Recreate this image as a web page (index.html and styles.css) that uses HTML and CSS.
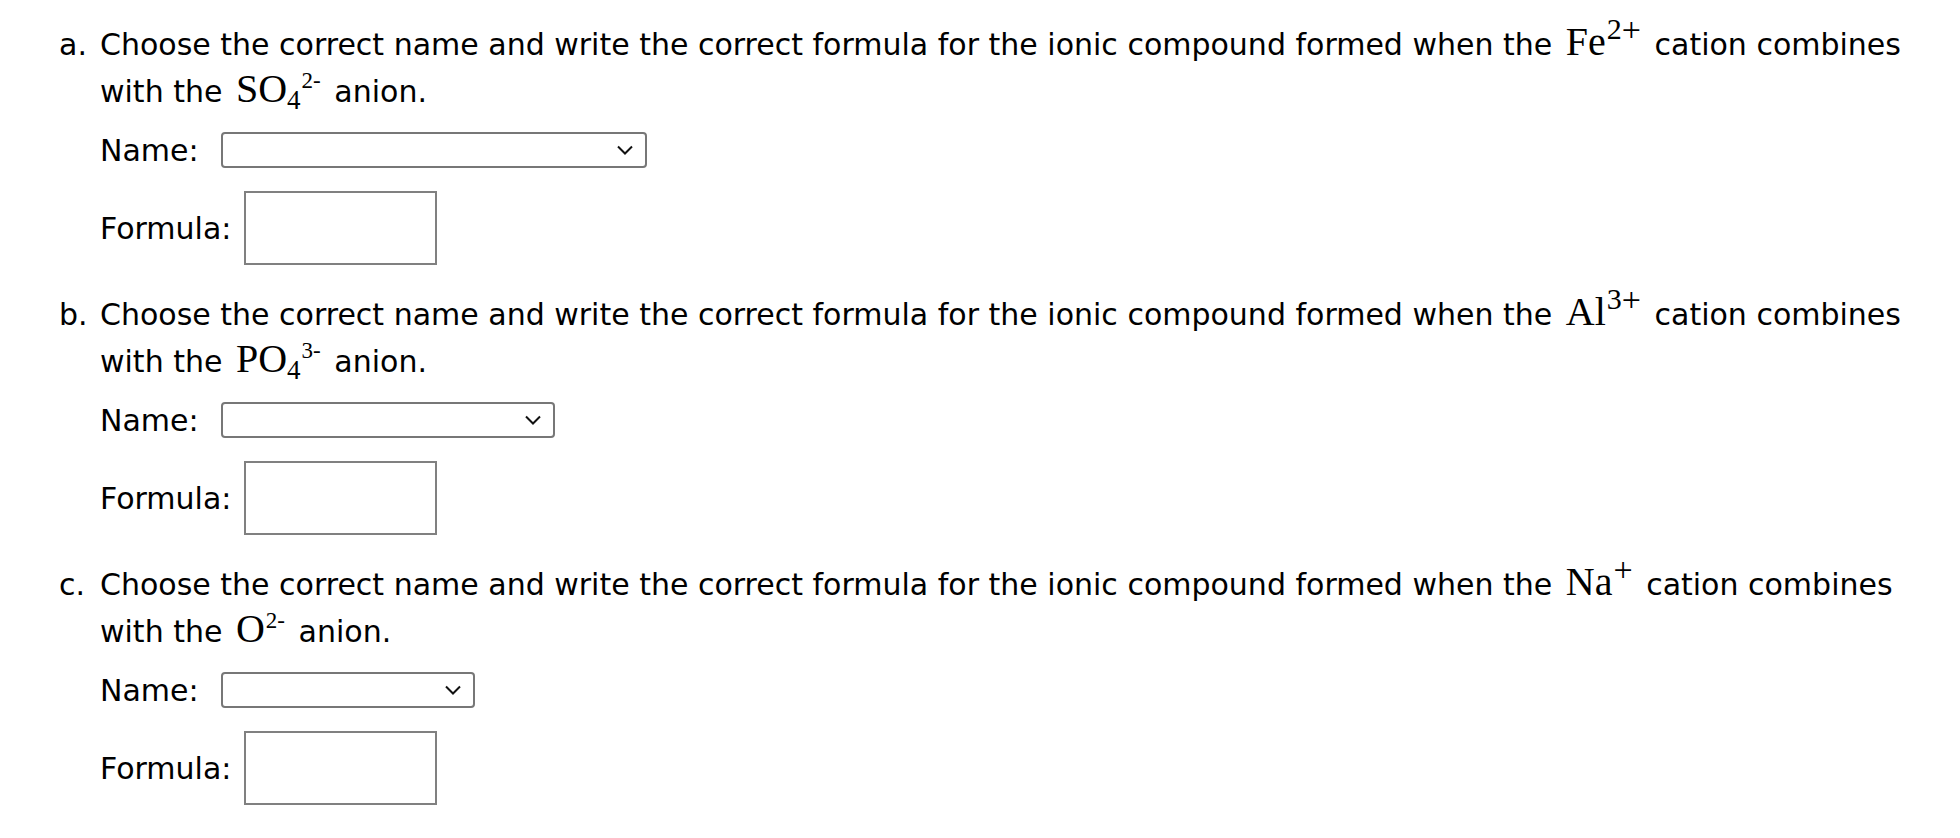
FILE: index.html
```html
<!DOCTYPE html>
<html lang="en">
<head>
  <meta charset="UTF-8">
  <title>Ionic Compounds</title>
  <link rel="stylesheet" href="styles.css">
</head>
<body>

  <div class="question">
    <div class="prompt">
      <span class="marker">a.</span>
      <p class="text">Choose the correct name and write the correct formula for the ionic compound formed when the <span class="chem">Fe<sup>2<span class="plus">+</span></sup></span> cation combines<br>
      with the <span class="chem">SO<sub>4</sub><sup class="after-sub">2-</sup></span> anion.</p>
    </div>
    <div class="field">
      <label class="field-label">Name:</label>
      <select class="name-select select-a"></select>
    </div>
    <div class="field">
      <label class="field-label">Formula:</label>
      <input type="text" class="formula">
    </div>
  </div>

  <div class="question">
    <div class="prompt">
      <span class="marker">b.</span>
      <p class="text">Choose the correct name and write the correct formula for the ionic compound formed when the <span class="chem">Al<sup>3<span class="plus">+</span></sup></span> cation combines<br>
      with the <span class="chem">PO<sub>4</sub><sup class="after-sub">3-</sup></span> anion.</p>
    </div>
    <div class="field">
      <label class="field-label">Name:</label>
      <select class="name-select select-b"></select>
    </div>
    <div class="field">
      <label class="field-label">Formula:</label>
      <input type="text" class="formula">
    </div>
  </div>

  <div class="question">
    <div class="prompt">
      <span class="marker">c.</span>
      <p class="text">Choose the correct name and write the correct formula for the ionic compound formed when the <span class="chem">Na<sup><span class="plus">+</span></sup></span> cation combines<br>
      with the <span class="chem">O<sup class="anion">2-</sup></span> anion.</p>
    </div>
    <div class="field">
      <label class="field-label">Name:</label>
      <select class="name-select select-c"></select>
    </div>
    <div class="field">
      <label class="field-label">Formula:</label>
      <input type="text" class="formula">
    </div>
  </div>

</body>
</html>
```

FILE: styles.css
```css
body {
  margin: 0;
  padding: 21px 0 0 59px;
  background: #fff;
  color: #000;
  font-family: "DejaVu Sans", Verdana, sans-serif;
  font-size: 30px;
}
.question {
  margin-bottom: 26px;
}
.prompt {
  display: flex;
}
.marker {
  width: 41px;
  line-height: 47px;
  flex-shrink: 0;
}
.text {
  margin: 0;
  line-height: 47px;
  white-space: nowrap;
}
.chem {
  font-family: "Liberation Serif", "Times New Roman", serif;
  font-size: 40px;
  line-height: 0;
  margin: 0 4px;
}
.chem sup {
  font-size: 30px;
  line-height: 0;
  vertical-align: 16px;
  margin-left: 1px;
}
.chem sup .plus {
  font-size: 34px;
  vertical-align: -2px;
}
.chem sub {
  font-size: 27px;
  line-height: 0;
  vertical-align: -7px;
}
.chem sup.after-sub,
.chem sup.anion {
  font-size: 23px;
  vertical-align: 14px;
  margin-left: 1px;
}
.field {
  display: flex;
  align-items: center;
  padding-left: 41px;
}
.field + .field {
  margin-top: 23px;
}
.prompt + .field {
  margin-top: 17px;
}
.field-label {
  margin-right: 22px;
}
.field-label + .formula {
  margin-left: -9px;
}
.name-select {
  appearance: none;
  height: 36px;
  border: 2px solid #777;
  border-radius: 4px;
  background: #fff url("data:image/svg+xml,%3Csvg xmlns='http://www.w3.org/2000/svg' width='16' height='10' viewBox='0 0 16 10'%3E%3Cpolyline points='1,1.5 8,8.5 15,1.5' fill='none' stroke='%23111' stroke-width='2'/%3E%3C/svg%3E") no-repeat right 12px center;
  font-size: 16px;
}
.select-a {
  width: 426px;
}
.select-b {
  width: 334px;
}
.select-c {
  width: 254px;
}
.formula {
  width: 193px;
  height: 74px;
  box-sizing: border-box;
  border: 2px solid #808080;
  border-radius: 0;
  padding: 0 6px;
  font-size: 24px;
}
```
